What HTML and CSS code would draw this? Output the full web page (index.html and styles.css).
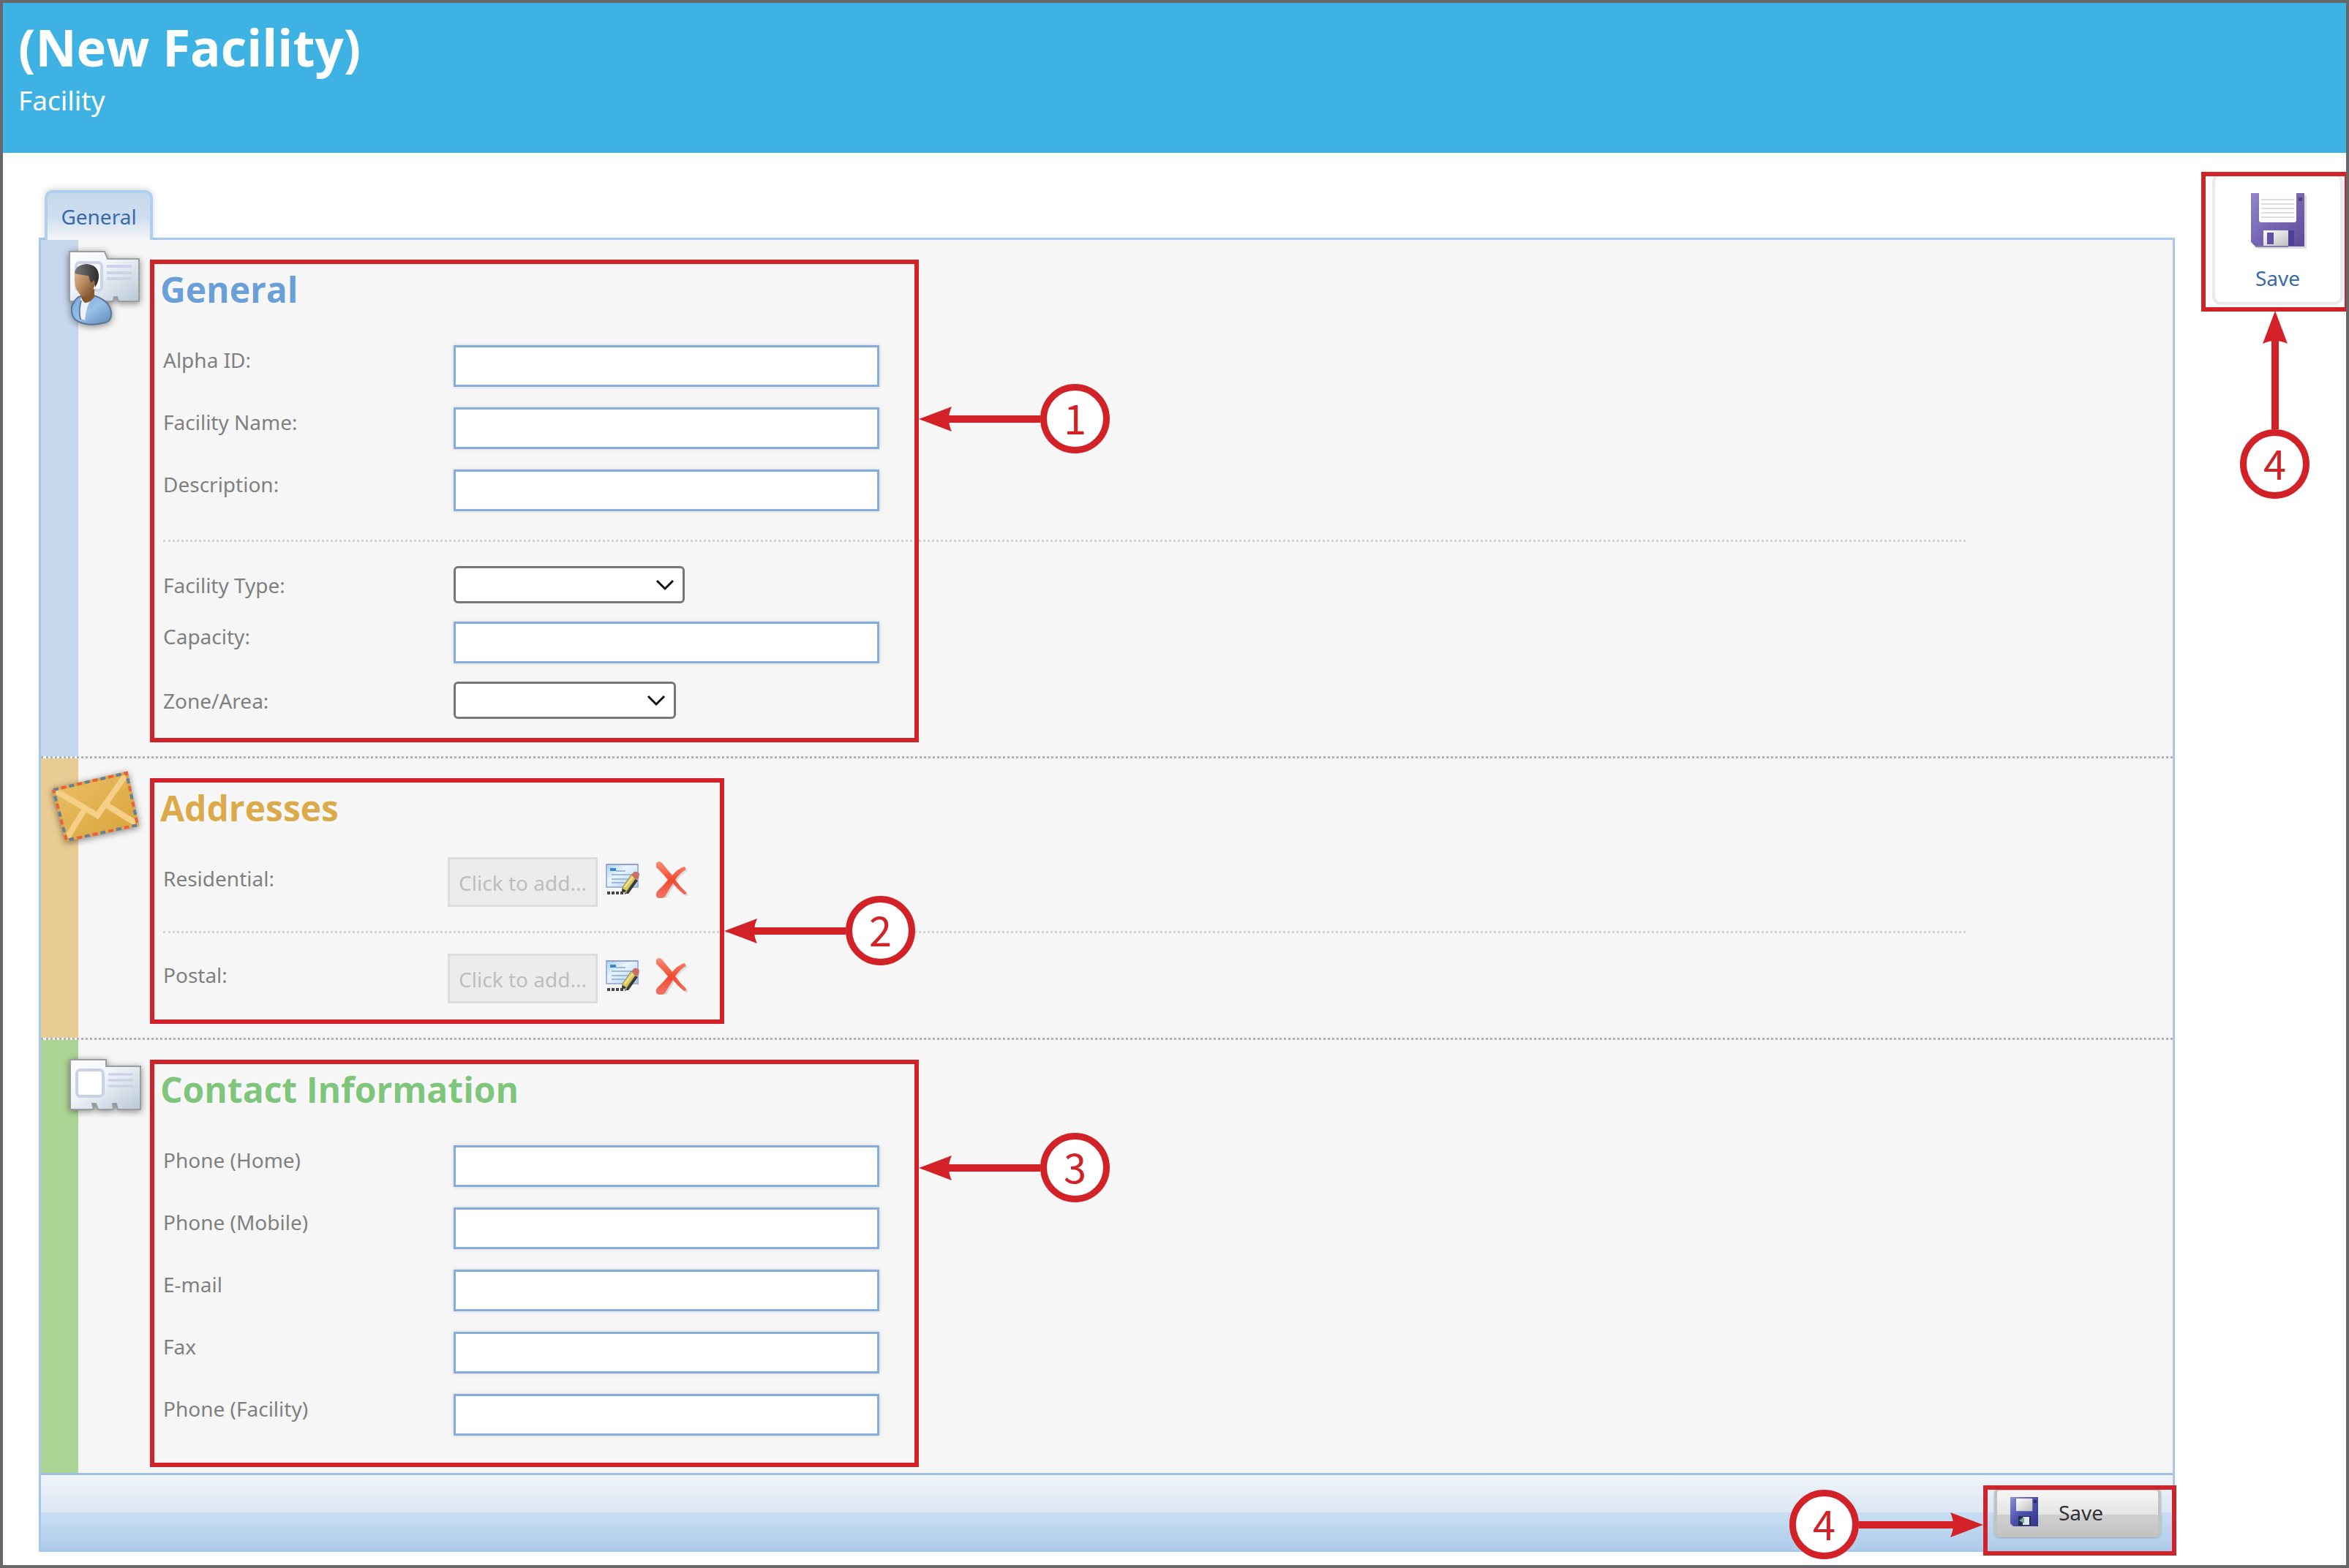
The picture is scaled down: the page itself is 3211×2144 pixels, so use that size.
FILE: index.html
```html
<!DOCTYPE html>
<html lang="en">
<head>
  <meta charset="UTF-8">
  <meta name="viewport" content="width=device-width, initial-scale=1.0">
  <title>(New Facility)</title>
  <link rel="stylesheet" href="styles.css">
</head>
<body>
  <!-- shared icons -->
  <svg class="defs" width="0" height="0" aria-hidden="true">
    <defs>
      <linearGradient id="cardFill" x1="0" y1="0" x2="1" y2="1">
        <stop offset="0" stop-color="#ffffff"/><stop offset="0.4" stop-color="#f2f5f9"/><stop offset="1" stop-color="#b9c8d8"/>
      </linearGradient>
      <linearGradient id="skin" x1="0" y1="0" x2="1" y2="1">
        <stop offset="0" stop-color="#e8c39a"/><stop offset="0.5" stop-color="#b5845a"/><stop offset="1" stop-color="#6a4220"/>
      </linearGradient>
      <linearGradient id="shirt" x1="0" y1="0" x2="1" y2="1">
        <stop offset="0" stop-color="#77a7d8"/><stop offset="0.5" stop-color="#98c0e8"/><stop offset="1" stop-color="#5d88b8"/>
      </linearGradient>
      <linearGradient id="hair" x1="0" y1="0" x2="1" y2="0">
        <stop offset="0" stop-color="#7a7a7a"/><stop offset="1" stop-color="#2c2c2c"/>
      </linearGradient>
      <linearGradient id="gold" x1="0" y1="0" x2="1" y2="1">
        <stop offset="0" stop-color="#ecc069"/><stop offset="1" stop-color="#d6a337"/>
      </linearGradient>
      <linearGradient id="note" x1="0" y1="0" x2="1" y2="1">
        <stop offset="0" stop-color="#a9d0f3"/><stop offset="0.4" stop-color="#eaf5ff"/><stop offset="1" stop-color="#a8cdf0"/>
      </linearGradient>
      <linearGradient id="cross" x1="0" y1="0" x2="0" y2="1">
        <stop offset="0" stop-color="#fa8f74"/><stop offset="0.5" stop-color="#f04a30"/><stop offset="1" stop-color="#f27565"/>
      </linearGradient>
      <linearGradient id="purple" x1="0" y1="0" x2="1" y2="1">
        <stop offset="0" stop-color="#9484cb"/><stop offset="0.5" stop-color="#7767b2"/><stop offset="1" stop-color="#5c4a9c"/>
      </linearGradient>
      <linearGradient id="indigo" x1="0" y1="0" x2="1" y2="1">
        <stop offset="0" stop-color="#8d8fd8"/><stop offset="0.5" stop-color="#4c4fab"/><stop offset="1" stop-color="#34358a"/>
      </linearGradient>
      <linearGradient id="metal" x1="0" y1="0" x2="1" y2="1">
        <stop offset="0" stop-color="#ffffff"/><stop offset="1" stop-color="#bdbdbd"/>
      </linearGradient>
      <symbol id="icon-edit" viewBox="0 0 50 46">
        <rect x="2" y="3" width="43" height="31" fill="url(#note)" stroke="#a3b3dc" stroke-width="2"/>
        <path d="M2 3h43" stroke="#8fa3d0" stroke-width="2"/>
        <rect x="7" y="8" width="8" height="4" fill="#3d86cc"/>
        <path d="M15 12h13M9 17h28M9 23h25M9 28h18" stroke="#9dbbe0" stroke-width="2"/>
        <path d="M28 43l12-21 5 3-13 18z" fill="#3b3a35"/>
        <path d="M24 34l12-17 6 5-12 17-7 3z" fill="#d9c863" stroke="#8d8148"/>
        <path d="M27 34l12-15" stroke="#f2e99c" stroke-width="2"/>
        <path d="M36 17l4-4q5-1 7 3l-1 6-4 2z" fill="#c76f60"/>
        <path d="M23 42l1-6 5 3z" fill="#333"/>
        <path d="M3 42h25" stroke="#444" stroke-width="4" stroke-dasharray="4 2"/>
      </symbol>
      <symbol id="icon-delete" viewBox="0 0 50 52">
        <path d="M4 4q4-4 8 0 7 9 14 17Q33 12 42 9q3 1 2 4-8 5-14 14 6 9 15 17 1 3-3 3-8-6-15-15-6 9-11 18-5 4-11 1-3-5 1-9Q13 36 20 27 11 16 4 10z" fill="#bbb" opacity="0.5" transform="translate(2 2)"/>
        <path d="M4 4q4-4 8 0 7 9 14 17Q33 12 42 9q3 1 2 4-8 5-14 14 6 9 15 17 1 3-3 3-8-6-15-15-6 9-11 18-5 4-11 1-3-5 1-9Q13 36 20 27 11 16 4 10z" fill="url(#cross)"/>
      </symbol>
      <symbol id="icon-chevron" viewBox="0 0 26 16">
        <path d="M2 2l11 11L24 2" fill="none" stroke="#111" stroke-width="3"/>
      </symbol>
    </defs>
  </svg>

  <header class="page-header">
    <h1>(New Facility)</h1>
    <p>Facility</p>
  </header>

  <main class="layout">
    <form class="facility">
      <nav class="tabs"><a class="tab" href="#general">General</a></nav>

      <div class="panel">
        <section class="section general" id="general">
          <div class="stripe"></div>
          <svg class="section-icon" width="108" height="116" viewBox="0 0 108 116" aria-hidden="true">
            <path d="M4 4h48l4 10h43v58H71l-2-6h-4l-1 6H4z" fill="url(#cardFill)" stroke="#9a9da1" stroke-width="2"/>
            <rect x="13" y="19" width="35" height="38" rx="5" fill="#fff" stroke="#ccd3ea" stroke-width="4"/>
            <path d="M55 24h34M55 33h34M55 41h34" stroke="#cdd2e8" stroke-width="4"/>
            <path d="M7 80q5-15 16-16h14q22 7 24 23 1 12-8 14-26 7-41-4-6-6-5-17z" fill="url(#shirt)" stroke="#5b7795" stroke-width="2"/>
            <path d="M20 67l3-5 14 2q-10 12-12 34l-7-3q-1-16 2-28z" fill="#eef1fa"/>
            <path d="M20 71q-4 12-1 26" fill="none" stroke="#5d7fa6" stroke-width="2"/>
            <path d="M19 60l19-5v11q-7 9-13 8-5-3-6-14z" fill="#84552e"/>
            <path d="M11 36q2-9 14-10 15 0 15 17-2 14-11 23-7 2-12-5-7-8-6-25z" fill="url(#skin)"/>
            <path d="M11 34q1-12 16-13 17 1 17 17 0 7-5 15l-1-10-5 4-3-10q-10-1-19-3z" fill="url(#hair)"/>
          </svg>
          <div class="section-body">
            <h2>General</h2>
            <div class="row">
              <label for="alphaId">Alpha ID:</label>
              <input type="text" id="alphaId">
            </div>
            <div class="row">
              <label for="facilityName">Facility Name:</label>
              <input type="text" id="facilityName">
            </div>
            <div class="row">
              <label for="description">Description:</label>
              <input type="text" id="description">
            </div>
            <hr>
            <div class="row select-row">
              <label for="facilityType">Facility Type:</label>
              <div class="select-wrap type">
                <select id="facilityType"><option></option></select>
                <svg class="chevron"><use href="#icon-chevron"/></svg>
              </div>
            </div>
            <div class="row tight">
              <label for="capacity">Capacity:</label>
              <input type="text" id="capacity">
            </div>
            <div class="row select-row">
              <label for="zone">Zone/Area:</label>
              <div class="select-wrap zone">
                <select id="zone"><option></option></select>
                <svg class="chevron"><use href="#icon-chevron"/></svg>
              </div>
            </div>
          </div>
          <div class="frame wide">
            <div class="callout">
              <svg class="arrow" viewBox="0 0 170 34" preserveAspectRatio="xMinYMid slice"><path d="M0 17L45 0q-8 17 0 34zM38 12h132v10H38z"/></svg>
              <span>1</span>
            </div>
          </div>
        </section>

        <section class="section addresses">
          <div class="stripe"></div>
          <svg class="section-icon envelope" width="128" height="106" viewBox="0 0 128 106" aria-hidden="true">
            <path d="M6 29L106 6l15 71L24 98z" fill="url(#gold)"/>
            <path d="M10 31l56 33 38-54M25 94l26-42M119 75L76 48" fill="none" stroke="#f5cf87" stroke-width="8"/>
            <path d="M6 29L106 6l15 71L24 98z" fill="none" stroke="#dba94a" stroke-width="4"/>
            <path d="M6 29L106 6l15 71L24 98z" fill="none" stroke="#667e96" stroke-width="4" stroke-dasharray="7 15"/>
            <path d="M6 29L106 6l15 71L24 98z" fill="none" stroke="#e8603c" stroke-width="4" stroke-dasharray="7 15" stroke-dashoffset="-11"/>
          </svg>
          <div class="section-body">
            <h2>Addresses</h2>
            <div class="row address-row">
              <label for="residential">Residential:</label>
              <button type="button" class="add" id="residential" disabled>Click to add...</button>
              <button type="button" class="icon-button" aria-label="Edit residential address"><svg width="50" height="46"><use href="#icon-edit"/></svg></button>
              <button type="button" class="icon-button" aria-label="Delete residential address"><svg width="50" height="52"><use href="#icon-delete"/></svg></button>
            </div>
            <hr>
            <div class="row address-row">
              <label for="postal">Postal:</label>
              <button type="button" class="add" id="postal" disabled>Click to add...</button>
              <button type="button" class="icon-button" aria-label="Edit postal address"><svg width="50" height="46"><use href="#icon-edit"/></svg></button>
              <button type="button" class="icon-button" aria-label="Delete postal address"><svg width="50" height="52"><use href="#icon-delete"/></svg></button>
            </div>
          </div>
          <div class="frame narrow">
            <div class="callout">
              <svg class="arrow" viewBox="0 0 170 34" preserveAspectRatio="xMinYMid slice"><path d="M0 17L45 0q-8 17 0 34zM38 12h132v10H38z"/></svg>
              <span>2</span>
            </div>
          </div>
        </section>

        <section class="section contact">
          <div class="stripe"></div>
          <svg class="section-icon card" width="104" height="80" viewBox="0 0 104 80" aria-hidden="true">
            <path d="M3 4h49v9h47v59H68l-2-8h-5l1 8H41l-3-8h-5l2 8H3z" fill="url(#cardFill)" stroke="#9a9da1" stroke-width="2"/>
            <rect x="12" y="18" width="36" height="36" rx="5" fill="#fff" stroke="#c8d1e6" stroke-width="4"/>
            <path d="M55 24h34M55 32h34M55 40h34" stroke="#c9cfe6" stroke-width="3"/>
          </svg>
          <div class="section-body">
            <h2>Contact Information</h2>
            <div class="row">
              <label for="phoneHome">Phone (Home)</label>
              <input type="tel" id="phoneHome">
            </div>
            <div class="row">
              <label for="phoneMobile">Phone (Mobile)</label>
              <input type="tel" id="phoneMobile">
            </div>
            <div class="row">
              <label for="email">E-mail</label>
              <input type="email" id="email">
            </div>
            <div class="row">
              <label for="fax">Fax</label>
              <input type="tel" id="fax">
            </div>
            <div class="row">
              <label for="phoneFacility">Phone (Facility)</label>
              <input type="tel" id="phoneFacility">
            </div>
          </div>
          <div class="frame wide">
            <div class="callout">
              <svg class="arrow" viewBox="0 0 170 34" preserveAspectRatio="xMinYMid slice"><path d="M0 17L45 0q-8 17 0 34zM38 12h132v10H38z"/></svg>
              <span>3</span>
            </div>
          </div>
        </section>

        <footer class="panel-footer">
          <button type="submit" class="save-small">
            <svg width="44" height="46" viewBox="0 0 44 46" aria-hidden="true">
              <path d="M2 2h38v40H6l-4-4z" fill="url(#indigo)"/>
              <path d="M9 4h24v18H9z" fill="#6a6cc0"/>
              <path d="M10 4h22v17H10z" fill="url(#metal)"/>
              <path d="M13 28h17v13H13z" fill="#252c4c"/>
              <path d="M19 29h9v11h-9z" fill="#dfe6f2"/>
              <path d="M14 34l7-5v9z" fill="#7fa7a2"/>
              <path d="M34 6h4v4h-4z" fill="#2c2c70"/>
            </svg>
            Save
          </button>
          <div class="frame"></div>
          <div class="callout left">
            <span>4</span>
            <svg class="arrow" viewBox="0 0 170 34" preserveAspectRatio="xMaxYMid slice"><path d="M170 17L125 0q8 17 0 34zM132 12H0v10h132z"/></svg>
          </div>
        </footer>
      </div>
    </form>

    <aside class="actions">
      <button type="button" class="save-large">
        <svg width="80" height="80" viewBox="0 0 80 80" aria-hidden="true">
          <path d="M6 5h73v73H11L6 72z" fill="#c9c9c9" opacity="0.6"/>
          <path d="M3 2h73v73H9l-6-6z" fill="url(#purple)"/>
          <path d="M14 2h51v37q0 3-3 3H17q-3 0-3-3z" fill="#fdfdfd"/>
          <path d="M17 11h45M17 17h45M17 23h45M17 29h45M17 35h45" stroke="#dcdcdc" stroke-width="2"/>
          <path d="M20 53h34v21H20z" fill="url(#metal)"/>
          <path d="M54 53h8v21h-8z" fill="#503e94"/>
          <path d="M25 56h9v16h-9z" fill="#6250a4"/>
          <path d="M68 8h5v5h-5z" fill="#4c4178"/>
          <path d="M9 75h45" stroke="#857da5" stroke-width="2"/>
        </svg>
        Save
      </button>
      <div class="frame"></div>
      <div class="callout up">
        <svg class="arrow" viewBox="0 0 34 170" preserveAspectRatio="xMidYMin slice"><path d="M17 0L34 45q-17-8-34 0zM12 38h10v132H12z"/></svg>
        <span>4</span>
      </div>
    </aside>
  </main>
</body>
</html>
```
FILE: styles.css
```css
* {
  box-sizing: border-box;
}
body {
  display: flex;
  flex-direction: column;
  min-height: 100vh;
  margin: 0;
  border: 4px solid #67686b;
  background: white;
  font-family: "Noto Sans", "Open Sans", sans-serif;
  font-size: 28px;
  color: #808080;
}
input, select, button {
  font: inherit;
}
.defs {
  position: absolute;
}

/* header */
.page-header {
  height: 205px;
  padding: 10px 21px;
  background: #3fb2e4;
  color: white;
}
.page-header h1 {
  margin: 0;
  font-family: "Open Sans", sans-serif;
  font-size: 69px;
  line-height: 100px;
}
.page-header p {
  margin: 0;
  font-size: 37px;
  line-height: 46px;
}

/* layout */
.layout {
  display: flex;
  flex: 1;
  padding: 51px 0 18px 49px;
}
.facility {
  flex: 1;
}
.tabs {
  display: flex;
  position: relative;
  z-index: 1;
  padding-left: 8px;
}
.tab {
  width: 148px;
  height: 68px;
  border: 4px solid #b0cfee;
  border-bottom: none;
  border-radius: 10px 10px 0 0;
  background: linear-gradient(#c5d8ea, #cfdff2 55%, #dde8f3 70%, #f5f5f6);
  box-shadow: 0 -2px 8px rgba(0,0,0,0.15);
  clip-path: inset(-12px -12px 0);
  color: #3a69a8;
  line-height: 64px;
  text-align: center;
  text-decoration: none;
}
.panel {
  margin-top: -3px;
  border: 3px solid #a5c8ec;
  background: #f6f6f6;
}

/* sections */
.section {
  display: flex;
  position: relative;
  border-bottom: 3px dotted #adb1b5;
}
.section.contact {
  border-bottom: 3px solid #9fc0e4;
}
.stripe {
  width: 51px;
}
.general .stripe {
  background: #c6d8ee;
}
.addresses .stripe {
  background: #e9cc93;
}
.contact .stripe {
  background: #abd594;
}
.section-icon {
  position: absolute;
  top: 12px;
  left: 35px;
  filter: drop-shadow(0 2px 5px rgba(0,0,0,0.45));
}
.section-icon.envelope {
  top: 14px;
  left: 11px;
}
.section-icon.card {
  top: 23px;
  left: 37px;
}
.section-body {
  flex: 1;
  padding: 36px 0 51px 112px;
}
.addresses .section-body {
  padding-bottom: 47px;
}
h2 {
  margin: 0 0 44px;
  font-family: "Open Sans", sans-serif;
  font-size: 48px;
  line-height: 64px;
  text-shadow: 0 0 6px white;
}
.addresses h2 {
  margin-bottom: 35px;
}
.general h2 {
  color: #6b9fd8;
}
.addresses h2 {
  color: #dbab4b;
}
.contact h2 {
  color: #7fc67c;
}
hr {
  height: 0;
  margin: 39px 283px 33px 4px;
  border: none;
  border-top: 3px dotted #d2d2d2;
}
.addresses hr {
  margin-top: 33px;
  margin-bottom: 28px;
}

/* form rows */
.row {
  display: flex;
  align-items: flex-start;
  margin-bottom: 28px;
  padding-left: 4px;
}
.row label {
  width: 397px;
  line-height: 40px;
}
.row input {
  width: 582px;
  height: 57px;
  padding: 0 12px;
  border: 3px solid #84addd;
  background: white;
  box-shadow: 0 0 5px rgba(0,0,0,0.15);
}
.row.select-row {
  align-items: center;
}
.row.select-row, .row.tight {
  margin-bottom: 25px;
}
.row:last-child {
  margin-bottom: 0;
}
.select-wrap {
  position: relative;
}
.select-wrap.type {
  width: 316px;
}
.select-wrap.zone {
  width: 304px;
}
.select-wrap select {
  display: block;
  width: 100%;
  height: 51px;
  padding: 0 48px 0 12px;
  border: 3px solid #767676;
  border-radius: 6px;
  background: white;
  appearance: none;
}
.chevron {
  position: absolute;
  top: 18px;
  right: 14px;
  width: 26px;
  height: 16px;
  pointer-events: none;
}
.row.address-row label {
  width: 389px;
  padding-top: 9px;
}
.add {
  width: 205px;
  height: 68px;
  margin-right: 10px;
  padding: 2px 0 0;
  border: 3px solid #dcdcdc;
  background: #ececec;
  color: #bdbdbd;
  text-align: center;
  white-space: nowrap;
}
.icon-button {
  display: flex;
  align-items: center;
  height: 60px;
  margin-right: 16px;
  padding: 0;
  border: none;
  background: none;
}

/* footer */
.panel-footer {
  display: flex;
  position: relative;
  justify-content: flex-end;
  height: 102px;
  padding: 17px 16px;
  background: linear-gradient(#f0f4fb, #dbe7f3 50%, #c8ddf3 50%, #aeccea);
}
.save-small {
  display: flex;
  align-items: center;
  gap: 24px;
  width: 228px;
  height: 68px;
  padding: 0 16px;
  border: 4px solid #c2c2c2;
  border-radius: 8px;
  background: linear-gradient(#f6f6f6, #e4e4e4 55%, #cfcfcf 55%, #c4c4c4);
  box-shadow: 0 1px 3px rgba(0,0,0,0.2);
  color: #333;
}

/* side actions */
.actions {
  position: relative;
  width: 234px;
}
.save-large {
  display: flex;
  flex-direction: column;
  align-items: center;
  gap: 18px;
  width: 179px;
  height: 180px;
  margin: -23px 0 0 51px;
  padding: 21px 0 0;
  border: 4px solid #ebe9ea;
  border-radius: 12px;
  background: white;
  color: #3a69a8;
  line-height: 40px;
}

/* red frames and numbered callouts */
.frame {
  position: absolute;
  border: 6px solid #d22228;
  pointer-events: none;
}
.section .frame {
  top: 27px;
  left: 149px;
  bottom: 19px;
}
.section .frame.wide {
  width: 1051px;
}
.section .frame.narrow {
  width: 785px;
}
.section.contact .frame {
  bottom: 8px;
}
.panel-footer .frame {
  top: 14px;
  right: -5px;
  width: 264px;
  height: 96px;
}
.actions .frame {
  top: -25px;
  right: -4px;
  width: 202px;
  height: 191px;
}
.callout {
  display: flex;
  position: absolute;
  align-items: center;
  color: #d22228;
  font-family: "Noto Sans CJK SC", sans-serif;
  font-size: 56px;
}
.callout span {
  width: 95px;
  height: 95px;
  border: 9px solid #d22228;
  border-radius: 50%;
  background: white;
  line-height: 72px;
  text-align: center;
}
.arrow {
  width: 166px;
  height: 34px;
  fill: #d22228;
}
.section .callout {
  top: 164px;
  left: calc(100% + 6px);
}
.section.addresses .callout {
  top: 155px;
}
.section.contact .callout {
  top: 94px;
}
.callout.left {
  top: 20px;
  right: 259px;
}
.callout.left .arrow {
  width: 170px;
}
.callout.up {
  flex-direction: column;
  top: 165px;
  right: 50px;
}
.callout.up .arrow {
  width: 34px;
  height: 162px;
}
```
